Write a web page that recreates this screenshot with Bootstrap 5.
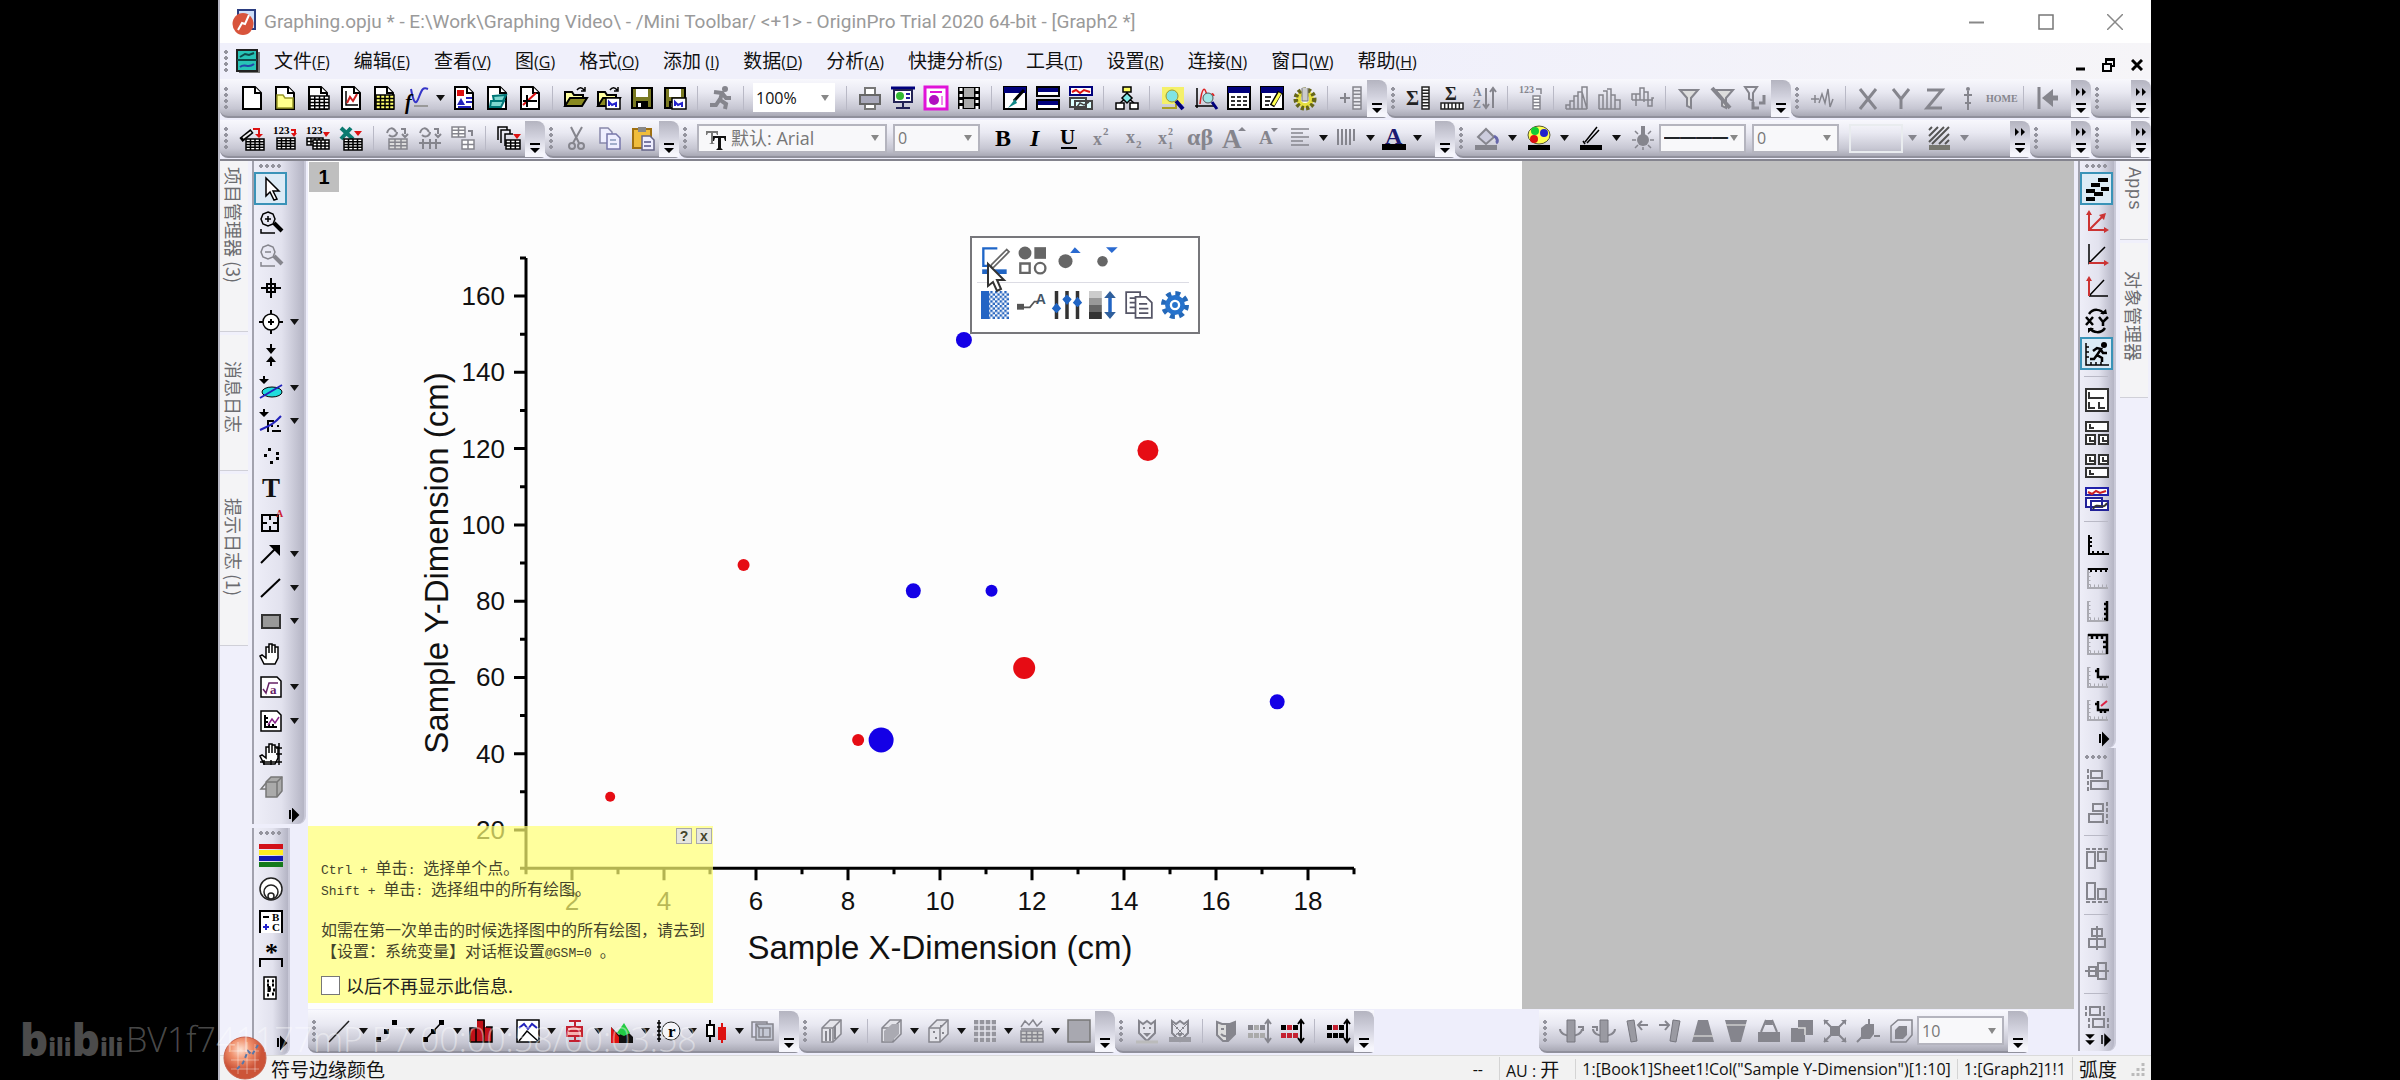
<!DOCTYPE html>
<html lang="zh-CN">
<head>
<meta charset="utf-8">
<meta name="viewport" content="width=device-width, initial-scale=1">
<title>Graphing.opju - OriginPro Trial 2020</title>
<link href="https://cdn.jsdelivr.net/npm/bootstrap@5.3.0/dist/css/bootstrap.min.css" rel="stylesheet">
<style>
body{background:#000;color:#111;font-family:"Open Sans","Noto Sans CJK SC",sans-serif;font-size:16px;line-height:20px}
.shell{display:grid;grid-template-columns:218px minmax(0,1fr) 249px;min-height:100vh}
.app-window{background:#eeeefb;grid-column:2;min-width:0;border-left:2px solid #b8b8c4}
.title-bar{height:43px;background:#fff;color:#9a9a9a;padding:0 2px 0 12px}
.title-bar h1{font:400 19px/24px Roboto,"Open Sans",sans-serif;margin:0;color:#9a9a9a}
button{font:inherit;color:inherit;background:none;border:0;padding:0;display:inline-flex;align-items:center;justify-content:center}
.win-btn{width:69px;height:40px}
.menu-row{height:36px;background:linear-gradient(90deg,#f0f0fb 60%,#f6f5f8)}
.menu-icon{margin-right:13px}
.menu-row a{color:#111;text-decoration:none;font:19px/24px "Noto Sans CJK SC",sans-serif;margin-right:24px;white-space:nowrap}
.menu-row a span{font:16px/24px "Open Sans",sans-serif}
.tool-row{height:39px}
.tool-row+.tool-row{height:41px;padding-top:2px;padding-bottom:1px}
.strip{background:linear-gradient(#f8f8fd,#e9e9f2 35%,#c6c6d2 80%,#a9a9b5);border-bottom:2px solid #90909c;border-radius:0 0 4px 8px;display:flex;align-items:center;height:100%;flex:none;min-width:0}
.strip .strip-icons{display:flex;align-items:center;height:100%;flex:none}
.grip{width:15px;height:24px;flex:none;background:radial-gradient(circle at 6px 3px,#94949e 2px,transparent 2px) 0 0/15px 6px repeat-y}
.more{width:20px;height:100%;flex:none;background:linear-gradient(#b4b4c0,#d2d2de 45%,#f6f6fc 90%);border-radius:0 8px 0 0;align-items:flex-end;margin-bottom:-2px}
.tool{width:33px;height:33px;flex:none}
.tool svg,.mini svg{width:24px;height:24px;overflow:visible}
.off{color:#85858d}
.drop{width:14px;height:33px;flex:none}
.wide .drop{width:19px}
.tool-gap{width:1px;height:24px;margin:0 6px;background:#b9b9c6;flex:none}
.combo{appearance:none;border:2px solid #b4b4be;background:#f8f8fa url("data:image/svg+xml,%3Csvg xmlns='http://www.w3.org/2000/svg' viewBox='0 0 8 6'%3E%3Cpath d='M0 0h8L4 6z' fill='%23888'/%3E%3C/svg%3E") no-repeat right 6px center/8px 6px;border-radius:0;height:29px;font:16px/22px "Open Sans","Noto Sans CJK SC",sans-serif;color:#777;padding:0 3px;margin-right:6px;flex:none;width:87px}
.combo-zoom{border:0;background-color:#fff;color:#111;width:82px;margin:0 5px 0 3px}
.face-box{position:relative;margin-left:3px;flex:none}
.face-box .combo{width:190px;padding-left:32px;font-size:18px}
.face-box svg{position:absolute;left:8px;top:4px;overflow:visible;pointer-events:none}
.before-more{margin-right:11px}
.work{height:848px}
.side-tabs{width:32px;background:#f0f0fb;flex:none}
.side-tabs.end{width:31px}
.side-tabs button{writing-mode:vertical-rl;text-orientation:sideways;font:18px/22px "Noto Sans CJK SC",sans-serif;color:#6c6c70;border-bottom:1px solid #d0d0d8;justify-content:flex-start;align-items:center;background:#f4f4f6;width:28px;padding-top:6px}
.rail{background:linear-gradient(90deg,#eeeef8,#e2e2ee 55%,#b4b4c4);border-left:2px solid #a2a2ae;border-right:2px solid #c9c9d8;border-radius:0 0 8px 0;display:flex;flex-direction:column;flex:none}
.rail .strip-icons{display:flex;flex-direction:column}
.rail-main{width:54px;height:663px}
.rail-main .strip-icons{height:633px;justify-content:space-between}
.rail-grip{height:11px;width:24px;margin-left:4px;background:radial-gradient(circle at 3px 5px,#94949e 2px,transparent 2px) 0 0/6px 11px repeat-x;flex:none}
.rail .rail-line{display:flex;align-items:center}
.rail .tool-gap{height:1px;width:24px;margin:6px 4px}
.picked{border:2px solid #3a93b8;background:#dcebf6}
.paper{flex:1214 1 0;background:#fdfdfd;position:relative;min-width:0}
.blank{flex:552 1 0;background:#bfbfbf}
.page-no{position:absolute;left:1px;top:1px;width:30px;height:30px;background:#bfbfbf;color:#000;font:bold 20px/30px "Liberation Sans",sans-serif;text-align:center}
.plot{width:100%;display:block;font-family:"Liberation Sans",sans-serif;overflow:visible}
.hint{position:absolute;left:0;bottom:6px;width:405px;height:177px;background:rgba(255,255,116,.7);font:16px/21px "Noto Sans CJK SC",sans-serif;color:#44442c;padding:31px 0 0 13px}
.hint p{margin:0 0 20px;white-space:nowrap}
.hint p+p{margin-bottom:12px}
.hint code{font:13px/0 "Liberation Mono",monospace;color:inherit;white-space:pre}
.hint label{font-size:18px;line-height:24px;color:#222}
.hint .form-check-input{width:19px;height:19px;border-radius:0;margin:0 6px 0 0;border:1px solid #777;background:#fff}
.hint-btns{position:absolute;right:1px;top:2px;gap:4px}
.hint-btns button{width:16px;height:16px;background:#e6e6e0;border:1px solid #aaa;font:bold 14px/14px "Liberation Sans",sans-serif}
.mini{position:absolute;left:662px;top:75px;width:230px;height:98px;background:#fff;border:2px solid #77777b;padding:4px 5px}
.mini button{width:36px;height:36px}
.mini svg{width:28px;height:28px}
.mini .mini-line{border-bottom:1px solid #dcdce4;height:41px;width:212px;gap:1px}
.mini .pointer{position:absolute;left:14px;top:25px;width:22px;height:30px}
.foot-tools{height:44px;padding-top:1px}
.status{background:#f2f2f2;height:27px;font-size:16px;line-height:20px;border-top:1px solid #dadada}
.status span{white-space:nowrap}
.status .cell{padding:0 6px;border-left:1px solid #d4d4d4}
.cjk{font:19px/24px "Noto Sans CJK SC",sans-serif}
.ball{position:absolute;left:223px;top:1036px;width:44px;height:44px}
.stamp{position:absolute;left:20px;top:1009px;height:60px;color:rgba(255,255,255,.3);font:300 34px/60px "Open Sans","Roboto",sans-serif;white-space:nowrap;pointer-events:none}
.stamp svg{width:98px;height:60px;margin-right:8px;overflow:visible}
.stamp .clock{color:rgba(255,255,255,.42)}
</style>
<script src="https://cdn.jsdelivr.net/npm/bootstrap@5.3.0/dist/js/bootstrap.bundle.min.js"></script>
</head>
<body>
<div class="shell position-relative overflow-hidden">
<main class="app-window d-flex flex-column">
  <header class="title-bar d-flex align-items-center">
    <svg width="24" height="26" viewBox="0 0 24 26" class="me-2"><path d="M6 1h17v19H6z" fill="#cfe0fa" stroke="#2b3d80" stroke-width="2"/><ellipse cx="11" cy="15" rx="10.500" ry="11" fill="#d8543c"/><path d="M6 21l4-7 3 1 4-9" stroke="#fff" stroke-width="2" fill="none"/></svg>
    <h1 class="me-auto text-nowrap">Graphing.opju * - E:\Work\Graphing Video\ - /Mini Toolbar/ &lt;+1&gt; - OriginPro Trial 2020 64-bit - [Graph2 *]</h1>
    <button class="win-btn" aria-label="最小化"><svg width="16" height="16"><path d="M0 8.500h15" stroke="#888" stroke-width="2"/></svg></button>
    <button class="win-btn" aria-label="最大化"><svg width="16" height="16"><path d="M1 1h14v14H1z" fill="none" stroke="#777" stroke-width="1.500"/></svg></button>
    <button class="win-btn" aria-label="关闭"><svg width="16" height="16"><path d="M0 0l16 16M16 0L0 16" stroke="#888" stroke-width="1.500"/></svg></button>
  </header>

  <nav class="menu-row d-flex align-items-center">
    <i class="grip"></i>
    <svg width="26" height="24" viewBox="0 0 26 24" class="menu-icon"><path d="M2 1h20v21H2z" fill="#27c4b6" stroke="#222" stroke-width="2"/><path d="M24 3v21H4" stroke="#777" stroke-width="2" fill="none"/><path d="M2 11h20M5 8l5-3 4 1 5-2" stroke="#0d4a4a" stroke-width="2" fill="none"/><path d="M5 18c5-4 8 2 14-3" stroke="#24a" stroke-width="2" fill="none"/></svg>
    <a href="#">文件<span>(<u>F</u>)</span></a><a href="#">编辑<span>(<u>E</u>)</span></a><a href="#">查看<span>(<u>V</u>)</span></a><a href="#">图<span>(<u>G</u>)</span></a><a href="#">格式<span>(<u>O</u>)</span></a><a href="#">添加 <span>(<u>I</u>)</span></a><a href="#">数据<span>(<u>D</u>)</span></a><a href="#">分析<span>(<u>A</u>)</span></a><a href="#">快捷分析<span>(<u>S</u>)</span></a><a href="#">工具<span>(<u>T</u>)</span></a><a href="#">设置<span>(<u>R</u>)</span></a><a href="#">连接<span>(<u>N</u>)</span></a><a href="#">窗口<span>(<u>W</u>)</span></a><a href="#">帮助<span>(<u>H</u>)</span></a>
    <div class="ms-auto d-flex align-items-center gap-3 pe-2 pt-2">
      <button aria-label="最小化图"><svg width="10" height="14"><path d="M0 11h9" stroke="#000" stroke-width="3"/></svg></button>
      <button aria-label="还原图"><svg width="13" height="14" viewBox="0 0 13 14"><path d="M4 5V1h8v7H9M1 6h8v7H1zM1 6h8M4 2h8" fill="none" stroke="#000" stroke-width="2"/></svg></button>
      <button aria-label="关闭图"><svg width="12" height="12"><path d="M1 1l10 10M11 1L1 11" stroke="#000" stroke-width="3"/></svg></button>
    </div>
  </nav>

  <div class="tool-row d-flex">
    <div class="strip"><i class="grip"></i>
      <div class="strip-icons" data-icons="new folder book graph sheet func v layout notes matrix - open opentpl save savetpl - run -"></div>
      <select class="combo combo-zoom" aria-label="缩放"><option>100%</option></select>
      <div class="strip-icons" data-icons="- print slide pink film - winpaint winsplit wingraph - tree - find findgraph wintable winedit gear - addcol"></div>
      <button class="more" data-more></button></div>
    <div class="strip"><i class="grip"></i>
      <div class="strip-icons" data-icons="sumcol sumrow sort - num - bars1 bars2 bars3 - filter filteroff filterref"></div>
      <button class="more" data-more></button></div>
    <div class="strip flex-fill"><i class="grip"></i>
      <div class="strip-icons off" data-icons="wave - bigx bigy bigz pin home - edge"></div>
      <button class="more ms-auto" data-more="2"></button></div>
    <div class="strip" style="width:60px"><i class="grip"></i><button class="more ms-auto" data-more="2"></button></div>
  </div>

  <div class="tool-row d-flex">
    <div class="strip"><i class="grip"></i>
      <div class="strip-icons" data-icons="wizard imp1 imp2 excel - re1 re2 re3 - stack"></div>
      <button class="more" data-more></button></div>
    <div class="strip"><i class="grip"></i>
      <div class="strip-icons" data-icons="cut copy paste"></div>
      <button class="more" data-more></button></div>
    <div class="strip"><i class="grip"></i>
      <div class="face-box"><select class="combo" aria-label="字体"><option>默认: Arial</option></select>
      <svg width="24" height="24" viewBox="0 0 24 24"><path d="M1 3h12v4h-1l-1-2H8v10l2 1H4l2-1V5H3L2 7H1z" fill="#777"/><path d="M8 8h13v5h-1l-1-3h-3v10l2 2h-7l2-2V10h-3l-1 3H8z" fill="#111"/></svg></div>
      <select class="combo" aria-label="字号"><option>0</option></select>
      <div class="strip-icons before-more" data-icons="bold ital under sup sub supsub greek fontup fontdown align v vert v fontcol v"></div>
      <button class="more" data-more></button></div>
    <div class="strip flex-fill"><i class="grip"></i>
      <div class="strip-icons wide" data-icons="bucket v palette v pen v sun"></div>
      <select class="combo text-dark" aria-label="线型"><option>━━━━</option></select>
      <select class="combo" aria-label="线宽"><option>0</option></select>
      <button class="border border-2 border-secondary-subtle ms-1" style="width:54px;height:29px" aria-label="填充图案"></button>
      <div class="strip-icons wide off" data-icons="v hatch v"></div>
      <button class="more ms-auto" data-more="2"></button></div>
    <div class="strip" style="width:61px"><i class="grip"></i><button class="more ms-auto" data-more="2"></button></div>
    <div class="strip" style="width:60px"><i class="grip"></i><button class="more ms-auto" data-more="2"></button></div>
  </div>

  <div class="d-flex flex-fill" style="border-top:2px solid #84848e">
    <div class="side-tabs">
      <button style="height:171px">项目管理器 (3)</button><button style="height:136px;padding-top:26px">消息日志</button><button style="height:172px;padding-top:24px">提示日志 (1)</button>
    </div>
    <div class="d-flex flex-column" style="width:56px">
      <div class="rail rail-main"><i class="rail-grip"></i>
        <div class="strip-icons" data-rail="cursor* zoomin zoomout cross target+ arrows ellipse+ mask+ dots text region arrow+ line+ rect+ hand eqn+ graphobj+ handaxis cube"></div>
        <svg class="align-self-end me-1 mt-1" width="12" height="16"><path d="M2 2v9M5 2v10l5-5z" stroke="#000" stroke-width="2"/></svg></div>
      <div class="rail mt-1 flex-fill" style="width:38px"><i class="rail-grip"></i>
        <div class="strip-icons" data-rail="stripes ring bc star dotbox"></div>
        <svg class="align-self-end mt-auto mb-1" width="12" height="16"><path d="M2 3v9M5 3v10l5-5z" stroke="#000" stroke-width="2"/></svg></div>
    </div>
    <div class="flex-fill d-flex flex-column" style="min-width:0">
      <div class="work d-flex">
        <section class="paper">
          <svg class="plot" viewBox="0 0 1214 848" id="plot" role="img" aria-label="Sample Y-Dimension 与 Sample X-Dimension 散点图"></svg>
          <span class="page-no">1</span>
          <div class="mini">
            <div class="mini-line d-flex" data-mini="edit shapes bigger smaller"></div>
            <div class="d-flex pt-1" data-mini="pattern label sliders grade copies cog"></div>
            <svg class="pointer" viewBox="0 0 22 30"><path d="M2 1v22l5-4 4 9 4-2-4-9h7z" fill="#fff" stroke="#333" stroke-width="2"/></svg>
          </div>
          <aside class="hint">
            <div class="hint-btns d-flex"><button aria-label="帮助">?</button><button aria-label="关闭提示">x</button></div>
            <p><code>Ctrl + </code>单击<code>: </code>选择单个点。<br><code>Shift + </code>单击<code>: </code>选择组中的所有绘图。</p>
            <p>如需在第一次单击的时候选择图中的所有绘图，请去到<br>【设置：系统变量】对话框设置<code>@GSM=0 </code>。</p>
            <label class="d-flex align-items-center" for="again"><input class="form-check-input" type="checkbox" id="again">以后不再显示此信息.</label>
          </aside>
        </section>
        <div class="blank"></div>
      </div>
      <div class="foot-tools d-flex">
        <div class="strip"><i class="grip"></i>
          <div class="strip-icons" data-icons="p_line v p_dots v p_ld v p_bar v p_multi v p_box v p_area v p_polar v p_candle v p_tpl"></div><button class="more" data-more></button></div>
        <div class="strip"><i class="grip"></i>
          <div class="strip-icons" data-icons="d_bars v - d_surf v d_scat v d_grid v d_prof v d_img"></div><button class="more" data-more></button></div>
        <div class="strip"><i class="grip"></i>
          <div class="strip-icons" data-icons="m_face m_facex - m_mask m_dotoff m_dot - m_dot2"></div><button class="more" data-more></button></div>
        <div class="strip ms-auto" style="margin-right:46px"><i class="grip"></i>
          <div class="strip-icons off" data-icons="r_1 r_2 r_3 r_4 r_5 r_6 r_7 r_8 r_9 r_10 r_11"></div>
          <select class="combo m-0" aria-label="旋转角度"><option>10</option></select><button class="more ms-1" data-more></button></div>
      </div>
    </div>
    <div class="d-flex flex-column ms-1 me-1" style="width:38px">
      <div class="rail"><i class="rail-grip"></i>
        <div class="strip-icons" data-rail="speed* ax1 ax2 ax3 swapxy runaxis* - lay1 lay2 lay3 lay4 - t1 t2 t3 t4 t5 t6"></div>
        <svg class="align-self-end me-1 mt-1" width="12" height="18"><path d="M2 4v9M5 4v10l5-5z" stroke="#000" stroke-width="2"/></svg></div>
      <div class="rail flex-fill mb-1 off"><i class="rail-grip mt-1"></i>
        <div class="strip-icons" data-rail="al1 al2 - al3 al4 - al5 al6 - al7"></div>
        <svg class="mt-auto mb-1 ms-1" width="30" height="14"><path d="M3 2l3 3 3-3zM3 8l3 3 3-3zM18 2v9M21 2v10l5-5z" stroke="#000" stroke-width="1.500" fill="#000"/></svg></div>
    </div>
    <div class="side-tabs end"><button style="height:79px;font-family:'Liberation Mono',monospace">Apps</button><button style="height:155px;padding-top:28px">对象管理器</button></div>
  </div>

  <footer class="status d-flex align-items-center">
    <span class="cjk me-auto" style="padding-left:51px">符号边缘颜色</span>
    <span class="pe-2 me-2">--</span><span class="cell pe-3">AU : <b class="cjk fw-normal">开</b></span>
    <span class="cell">1:[Book1]Sheet1!Col("Sample Y-Dimension")[1:10]</span><span class="cell">1:[Graph2]1!1</span><span class="cell cjk">弧度</span>
    <svg class="ms-1" width="24" height="20"><path d="M16 4v14M11 9v9M6 14v4" stroke="#bbb" stroke-width="3" stroke-dasharray="3 2"/></svg>
  </footer>
</main>
<svg class="ball" viewBox="0 0 44 44"><defs><radialGradient id="g1" cx=".4" cy=".3"><stop offset="0" stop-color="#fde0d0"/><stop offset=".5" stop-color="#f0906c"/><stop offset="1" stop-color="#cc5438"/></radialGradient></defs><circle cx="22" cy="22" r="21" fill="url(#g1)" stroke="#c8604a"/><path d="M8 15h28M8 24h28M8 33h28M15 6v32M24 6v32M32 8v28" stroke="#fff" stroke-opacity=".4"/><path d="M14 33l6-6 5-12 4 4 6-10" stroke="#5577aa" fill="none" stroke-dasharray="4 3" stroke-width="2"/></svg>
<div class="stamp d-flex align-items-center"><svg viewBox="0 0 98 60"><text x="0" y="47" font-family="Open Sans" font-weight="800" font-size="44" fill="#4b4b4b">b<tspan font-size="24">ili</tspan>b<tspan font-size="24">ili</tspan></text></svg><span>BV1f7</span><span class="clock">41177mP P7 00:00:58/00:03:58</span></div>
</div>

<script>
// Icon drawings on a 24 x 24 grid; short helpers keep the shared outlines in one place.
const L=(d,c='currentColor',w=2,f='none')=>`<path d="${d}" fill="${f}" stroke="${c}" stroke-width="${w}"/>`;
const F=(d,c='currentColor')=>`<path d="${d}" fill="${c}"/>`;
const T=(s,x,y,z,c='currentColor',e='')=>`<text x="${x}" y="${y}" font-size="${z}" fill="${c}" font-family="Liberation Serif" font-weight="bold" ${e}>${s}</text>`;
const C=(x,y,r,c)=>`<circle cx="${x}" cy="${y}" r="${r}" fill="${c}"/>`;
const G='#85858d',K='#000';
const page=(f='#fff')=>L('M3 1h12l6 6v16H3z',K,2,f)+L('M15 1v6h6',K,2,'#fff');
const grid=(x,y,w,h,n,m,c=K,f='#fff',s=1.5)=>{let d=`M${x} ${y}h${w}v${h}h${-w}z`;for(let i=1;i<n;i++)d+=`M${x+w*i/n} ${y}v${h}`;for(let i=1;i<m;i++)d+=`M${x} ${y+h*i/m}h${w}`;return L(d,c,s,f)};
const win=L('M1 1h22v22H1z',K,2,'#fff')+F('M1 1h22v6H1z','#00007c');
const redarrow=L('M13 3h6v6','#d11',2)+F('M15 8h8l-4 4z','#d11');
const cut3=(a)=>L('M3 9l8-8h11v14l-8 8H3z',G,1.5,'#e4e4ea')+L('M3 9h11v14M14 9l8-8',G,1.5)+a;
const face=c=>L('M4 2l4 3 4-3 4 3 4-3v12l-8 8-8-8z',c,2,'#e4e4ec')+F('M8 8h2v2H8zM14 8h2v2h-2z',c)+F('M8 14h8l-4 4z',c);
const disk=(c)=>L('M2 2h20v20H2z',K,2,'#7a7a22')+F('M6 3h12v8H6z','#fff')+F('M6 15h12v7H6z',K)+F('M8 17h3v4H8z','#fff')+c;
const fold=F('M1 6h7l2 3h9v11H1z','#ffffa0')+L('M1 20V6h7l2 3h9v3',K,2)+L('M1 20l5-8h17l-5 8z',K,2,'#8a8a20')+L('M13 4c2-3 5-3 7 0M21 1v4h-4',K,1.5);
const ghost=L('M3 2v20h20',"#aaaab2",2)+L('M4 2v18M5 20h18','#aaaab2',3).replace('/>',' stroke-dasharray="1 3"/>');
const hand=L('M5 22l-4-8 2-1 4 3V5h3v6V2h3v9V3h3v8V5h3v11l-3 6z',K,1.5,'#fff');
const red4=(c,c2)=>{let s='';for(const[x,y,r]of[[1,6,0],[7,6,1],[13,6,0],[1,14,1],[7,14,1],[13,14,1]])s+=F(`M${x} ${y}h5v5h-5z`,r?c2:c);return s+L('M21 1v22M18 5l3-4 3 4M18 19l3 4 3-4',c,2)};
const box=(r)=>r.map(a=>L(`M${a[0]} ${a[1]}h${a[2]}v${a[3]}h${-a[2]}z`,G,2)).join('');
const dsh=d=>L(d,G,2).replace('/>',' stroke-dasharray="4 2"/>');
const lay=r=>r.map(a=>L(`M${a[0]} ${a[1]}h${a[2]}v${a[3]}h${-a[2]}z`,'#333',2,'#fff')+L(`M${a[0]+4} ${a[1]+2}v${a[3]-5}h4`,'#333',2)).join('');
const I={
new:page(),folder:page()+L('M4 22V9h6l2 3h8v10z','#99992a',1.5,'#ffff8c'),book:page()+grid(4,10,19,13,4,4),
graph:page()+L('M7 5v14h12',K,1.5)+L('M8 17l3-6 3 4 4-7','#c22',2),sheet:page()+grid(4,9,18,14,4,4,K,'#ffff6a'),
func:L('M6 3c3 16 5 16 8 8s4-10 9-8','#3535c8')+T('f',0,23,20,K,'font-style="italic"')+L('M9 20h14','#999',2),
layout:page()+F('M5 4h7v6H5z','#d11')+F('M5 19l4-7 4 7z','#22b')+L('M14 12h6M14 16h6M6 21h13','#22b',2),
notes:page()+L('M8 10l13-1-3 6h-9zM6 15h13l-3 6H5z','#077',2,'#7fd8d0'),matrix:page()+L('M5 19L18 7','#d11')+L('M9 9v12M5 15h14',K,2),
open:fold,opentpl:fold+L('M9 12h14v11H9z',K,1.5,'#fff')+L('M12 20v-4l3 3 4-2v4','#22c',2),save:disk(''),savetpl:disk(L('M9 12h14v11H9z',K,1.5,'#fff')+L('M12 20v-4l3 3 4-2v4','#22c',2)),
run:C(16,3,3,G)+L('M5 6l8 1-2 7 6 4-1 5M11 13l-4 6H1M13 7l4 5h5',G,4),
print:L('M7 9V2h10v7M7 18v5h10v-5','#777',2,'#fff')+L('M2 9h20v9H2z','#666',2,'#aab'),
slide:L('M0 2h24','#00007c',3)+L('M3 4h18v12H3zM12 16v5M5 22h14','#225',2,'#fff')+C(9,10,4,'#3b3')+L('M15 8h4M15 12h4','#229',2),
pink:L('M1 1h22v22H1z','#e013d8',3,'#fff')+L('M6 6h12','#e013d8',2)+C(10,14,5,'#b010c0')+L('M18 10v9','#e013d8',1),
film:F('M1 1h22v22H1z',K)+F('M7 2h10v9H7zM7 13h10v9H7z','#aaa')+L('M4 2v21M20 2v21','#fff',3).replaceAll('/>',' stroke-dasharray="3 3"/>'),
winpaint:win+L('M21 4L11 15',K,3)+F('M12 13l-7 9 9-5z','#188'),winsplit:F('M1 1h22v8H1z','#00007c')+L('M1 1h22v9H1zM1 14h22v9H1z',K,2)+F('M2 6h20v3H2z','#fff')+F('M2 15h20v4H2z','#00007c')+F('M2 19h20v3H2z','#fff'),
wingraph:L('M1 1h22v8H1z','#00007c',2,'#fff')+L('M3 6l4-2 4 3 4-3 6 2','#d11',2)+L('M1 12h16v9H1zM6 15h17v8H6z','#444',2,'#dff')+L('M8 21l3-4 4 2 5-3','#444',1.5),
tree:L('M12 5v6M12 11l-7 6M12 11l7 6',K,1.5)+L('M8 1h8v5H8z',K,1.5,'#ffff60')+L('M12 7l5 5-5 5-5-5z',K,1.5,'#7fe8e8')+L('M1 17h8v6H1zM15 17h8v6h-8z',K,1.500,'#fff'),
find:F('M1 1h22v17H1z','#f4f06a')+L('M1 22h14V18','#aaa022',2)+`<circle cx="11" cy="10" r="6" fill="#7fe4e4" stroke="#9a9a30"/>`+L('M15 15l7 8','#00007c',4),
findgraph:L('M3 2v20M1 20h20',K,1.5)+L('M6 18c2-18 5-18 7-8s4-8 7 0','#d22',1.5)+`<circle cx="14" cy="12" r="5" fill="#9fe6e6" stroke="#555"/>`+L('M18 16l5 7','#00007c',3),
wintable:win+L('M4 11h16M4 15h16M4 19h16','#333',2).replace('/>',' stroke-dasharray="4 2"/>'),winedit:win+L('M5 11h6M5 15h5M5 19h4','#333',2)+L('M20 6l-8 14',K,5)+L('M20 7l-7 12','#ffff50',3),
gear:`<circle cx="12" cy="13" r="9" fill="#e8e040" stroke="#66661a" stroke-width="5" stroke-dasharray="3 2"/>`+C(12,13,7,'#e6e040')+C(12,13,4,'#fff')+F('M9 2h6v13H9z','#ccc')+L('M9 2v13h6V2','#777',1),
addcol:L('M1 12h10M6 7v10',G,2)+grid(14,1,8,22,1,6,G,'#e8e8ee'),
sumcol:T('Σ',-1,19,20,'#222')+grid(15,1,7,22,1,7,'#222'),sumrow:T('Σ',5,14,18,'#222')+grid(1,17,22,6,6,1,'#222'),
sort:T('A',0,10,12,G)+T('Z',0,22,12,G)+L('M13 2v20M10 18l3 4 3-4M20 22V2M17 6l3-4 3 4',G,2),
num:T('123',0,7,10,G)+L('M17 3h5v5',G,1.5)+grid(14,10,7,13,1,4,G),
bars1:L('M1 23v-4h4v4M5 19v-4h4v8M9 15v-5h4v13M13 10V6h4v17M17 6V1h5v22zM1 23h21',G,1.5),bars2:L('M1 23V9h4v14M5 5h4v18M9 3h4v20M13 9h4v14M17 14h5v9H1',G,1.5),
bars3:L('M1 14V8h4v12M5 8h4V2h4v14M9 2v12M13 6h4v14h4v-8h2M1 14h21',G,1.5),
filter:L('M3 4h18l-7 8v10l-4-2v-8z',G,2,'#ddd'),filteroff:L('M5 4h18l-7 8v10l-4-2v-8z',G,2,'#ddd')+L('M2 2l18 20',G,4),filterref:L('M2 1h12l-4 6v8l-4-2V7z',G,2)+L('M21 9v8h-5M10 16v6h6',G,3),
wave:L('M0 13h8M4 9v8M8 17l3-9 3 9 3-14 2 18 3-8',G,1.5),
bigx:L('M3 3l16 20M19 3L3 23',G,3),bigy:L('M3 3l8 10 8-10M11 13v10',G,3),bigz:L('M4 4h15L4 22h15',G,3),pin:C(12,3,2,G)+L('M12 5v15M8 9h8M9 17h6M12 20v4',G,2),home:T('HOME',-3,16,10),edge:L('M4 1v22',G,3)+F('M18 3v18L7 12z')+L('M15 12h8',G,5),
wizard:L('M1 14L12 5',K,5)+L('M3 12l8-6','#eee',2)+redarrow+grid(6,13,18,11,4,4),imp1:T('123',0,8,11,K)+L('M18 4h4v4','#d11')+F('M18 7h6l-3 4z','#d11')+grid(4,12,18,11,4,4),imp2:T('123',0,8,11,K)+F('M17 6h7l-4 5z','#d11')+grid(1,12,16,7,4,2)+grid(7,14,16,9,4,3),
excel:L('M2 2l12 11M12 2L2 13','#0a7a70',4)+F('M15 5h8l-4 5z','#d11')+grid(5,13,18,11,4,4),
re1:L('M2 7c2-6 6-6 9-1M12 6c0 4-5 6-8 3M16 3h4v5M17 8l3 3 3-3',G,2)+grid(4,13,18,10,3,3,G,'#ddd'),re2:L('M2 7c2-6 6-6 9-1M12 6c0 4-5 6-8 3M16 3h4v5M17 8l3 3 3-3M1 17h22M5 13v10M12 13v10M18 13v10',G,2),re3:grid(1,1,13,10,2,3,G)+L('M17 5h4v5',G)+grid(11,14,12,9,2,2,G),
stack:L('M1 14V1h9v3M4 17V4h9v4M8 20V8h8',K,1.5)+F('M16 8h8l-4 5z','#d11')+grid(9,14,14,9,3,3),
cut:L('M6 1l8 16M17 1L8 17',G,2)+`<g fill="none" stroke="${G}" stroke-width="2"><circle cx="7" cy="20" r="3"/><circle cx="16" cy="20" r="3"/></g>`,
copy:L('M2 2h8l4 4v11H2z','#88a',1.5,'#eef')+L('M9 8h9l4 4v11H9z','#77a',1.5,'#eef')+L('M12 14h6M12 18h7','#89b',1.5),
paste:L('M2 3h18v19H2z','#a07010',2,'#f0bd3c')+F('M7 1h8v5H7z','#888')+L('M11 10h8l4 4v10H11z','#668',1.5,'#eef')+L('M13 16h7M13 20h7','#558',1.5),
bold:T('B',4,20,24,K),ital:T('I',6,20,24,K,'font-style="italic"'),under:T('U',3,18,21,K)+L('M4 22h16',K,2),
sup:T('x',3,19,18,G)+T('2',13,9,11,G),sub:T('x',3,17,18,G)+T('2',13,22,11,G),supsub:T('x',2,18,18,G)+T('2',12,9,10,G)+T('1',12,23,10,G),greek:T('αβ',-2,19,24,G),
fontup:T('A',0,22,27,G)+F('M16 5l4-4 4 4z',G),fontdown:T('A',4,18,19,G)+F('M16 2h7l-4 4z',G),align:L('M3 3h18M3 7h12M3 11h18M3 15h12M3 19h18',G,1.500),vert:L('M3 3v16M7 3v16M11 3v16M15 3v16M19 3v12',G,2),
fontcol:T('A',3,18,24,'#1a1a70')+F('M0 18h24v6H0z',K),
bucket:L('M3 11l8-8 8 8-8 7z',G,2,'#ccd')+L('M19 10c4 2 4 6 2 7','#66a',3)+F('M0 19h22v5H0z',G),palette:`<ellipse cx="12" cy="9" rx="11" ry="9" fill="#ffff50" stroke="#553"/>`+C(8,5,4,'#1c3')+C(17,7,4,'#22c')+C(7,13,4,'#d11')+F('M1 19h22v5H1z',K),
pen:L('M18 1L6 16M20 4L8 17M4 15l2 3',K,1.5)+F('M1 19h22v5H1z',K),sun:C(12,14,6,G)+F('M10 0h4v10h-4z',G)+L('M1 14h4M19 14h4M4 5l3 3M20 5l-3 3M4 22l3-3M20 22l-3-3M12 21v3',G,1.5),
hatch:L('M2 4l3-3M2 10l9-9M2 16L17 1M5 18L22 1M12 18L22 8M18 18l4-4','#555',2)+F('M2 19h21v5H2z','#777770'),
cursor:L('M7 1v18l4-4 4 8 3-1-4-8h6z',K,1.500,'#fff'),zoomin:L('M9 2l5 2 2 5-2 5-5 2-5-2-2-5 2-5zM9 6v6M6 9h6M2 19v4h14',K,1.5)+L('M15 13l8 8',K,4),zoomout:L('M9 2l5 2 2 5-2 5-5 2-5-2-2-5 2-5zM6 9h6M2 19v4h14',G,1.5)+L('M15 13l8 8',G,4),
cross:L('M12 2v20M2 12h20M8 8h8v8H8z',K,2),target:`<circle cx="12" cy="12" r="8" fill="#fff" stroke="#000" stroke-width="1.5"/>`+L('M12 0v4M12 20v4M0 12h4M20 12h4M12 9v6M9 12h6',K,2),
arrows:L('M12 1v6M12 17v6',K,2)+F('M7 5h10l-5 6zM7 19h10l-5-6z',K),ellipse:`<ellipse cx="13" cy="16" rx="10" ry="5" fill="#20dcdc" stroke="#000"/>`+L('M1 22L23 9','#22b',2)+F('M0 3h10l-5 5zM4 0h2v4H4z',K),
mask:L('M9 23V12h6M12 17h2M18 17h2M13 22h9',K,2)+L('M1 21c8-4 12-4 21-14','#22b',2)+F('M0 3h10l-5 5zM4 0h2v4H4z',K),dots:F('M5 11h3v3H5zM9 5h3v3H9zM17 9h3v3h-3zM17 14h3v3h-3zM11 18h3v3h-3z',K),
text:T('T',3,21,27,'#111'),region:L('M3 6h16v16H3zM11 6v5M11 17v5M3 14h5M14 14h5',K,2)+T('A',17,8,10,'#c23'),arrow:L('M2 21L18 5',K,2)+F('M10 3h11v11z',K),line:L('M2 21L21 3',K,2),rect:L('M3 6h18v13H3z','#333',2,'#999'),
hand,eqn:L('M2 2h16l4 4v16H2z',K,1.5,'#fff')+L('M4 14l3 4 3-10h9','#626',1.500)+T('a',11,19,13,'#626'),graphobj:L('M2 2h16l4 4v16H2z',K,1.5,'#fff')+L('M6 6v12h12M5 9h4M5 13h4M10 19v-4M14 19v-4',K,2)+L('M9 16l4-6 3 4 4-6','#828',1.5),
handaxis:hand+L('M1 20h22M20 1v22M17 6h6M17 12h6M5 18v5M12 18v5',K,1.5),cube:L('M7 7l5-5h11v14l-5 6H7z','#777',1.5,'#aaa')+L('M7 7h11v15M18 7l5-5M7 14H2l5-6','#777',1.500),
stripes:F('M0 0h24v5H0z','#d21018')+F('M0 6h24v5H0z','#ffec20')+F('M0 12h24v5H0z','#1418b0')+F('M0 18h24v5H0z','#157a1c'),ring:`<g fill="#fff" stroke="#222" stroke-width="1.5"><circle cx="12" cy="12" r="11"/><circle cx="12" cy="15" r="7"/><circle cx="12" cy="19" r="3"/></g>`,
bc:L('M1 23V1h22v22',K,2,'#fff')+L('M4 7h6',K,2)+L('M4 17h6M7 14v6','#22c',2)+T('B',13,11,11,K)+T('C',13,21,11,K),star:T('*',6,18,26,K)+L('M1 24v-8h22v8',K,2),dotbox:L('M5 1h12v22H5z',K,1.5,'#fff')+L('M8 5h2M13 5h2M8 9h2M13 9h2M9 13h3M14 14h2M8 19h2M13 18h2M10 10v6',K,3),
speed:F('M13 1h10v4H13zM6 6h9v4H6zM16 10h8v4h-8zM1 12h9v4H1zM9 15h9v4H9zM1 20h9v4H1z',K),
ax1:L('M4 2v18h18M4 20L18 6','#c33',2)+F('M1 5l3-5 3 5zM19 17l5 3-5 3zM14 5l7-2-2 7z','#c33'),ax2:L('M4 1v19L20 4',K,1.500)+L('M4 20h18','#c33')+F('M19 17l5 3-5 3z','#c33'),ax3:L('M4 20h19M4 20L19 4',K,1.5)+L('M4 2v18','#c33')+F('M1 5l3-5 3 5z','#c33'),
swapxy:L('M1 8l7 8M8 8l-7 8M14 8l4 5 5-5M18 13v4M4 5c4-6 12-5 15 0M20 19c-4 6-12 5-15 0',K,2.5)+F('M15 5h7l-1-5zM9 19H3v5z',K),runaxis:L('M1 1v22h23M1 5h3M1 10h3M1 15h3M6 23v-3M11 23v-3M16 23v-3',K,1.500)+C(19,3,3,K)+L('M8 9l4-3 4 1-4 6 5 3v4M12 13l-3 4H5M16 8l2 3h4',K,2.5),
lay1:L('M1 1h22v22H1z','#333',2,'#fff')+L('M4 4v6h15M4 14v6h6M14 14v6h6','#333',2),lay2:lay([[1,1,22,9],[1,14,9,9],[14,14,9,9]]),lay3:lay([[1,1,9,9],[14,1,9,9],[1,14,22,9]]),lay4:L('M1 1h22v7H1z','#22a',2,'#fff')+L('M3 5l4 2 4-3 4 2 6-2','#c22')+L('M1 11h16v9H1zM6 14h17v9H6z','#229',2,'#fff')+L('M8 22c4-8 10 2 14-6','#333'),
t1:L('M4 2v19h20M4 5h3M4 9h3M4 13h3M8 21v-3M13 21v-3M18 21v-3',K,2),t2:ghost+L('M3 3h20M6 3v3M11 3v3M16 3v3M21 3v3',K,2),t3:ghost+L('M22 2v20M19 5h3M19 10h3M19 15h3M19 20h3',K,2.500),t4:ghost+L('M3 3h19v19M7 3v4M12 3v4M17 3v4M18 10h4M18 15h4',K,2.500),t5:ghost+L('M13 3v9h11M10 6h3M16 12v3M20 12v3',K,2.500),t6:ghost+L('M13 3v9h11M10 6h3M16 12v3M20 12v3',K,2.500)+L('M16 8l6-5','#d24',2),
al1:dsh('M3 1v22')+box([[6,3,11,7],[6,13,17,8]]),al2:dsh('M22 1v22')+box([[8,3,10,7],[4,13,14,8]]),al3:dsh('M1 2h22')+box([[2,5,8,16],[13,5,8,9]]),al4:dsh('M1 22h22')+box([[2,3,8,16],[13,9,8,10]]),al5:L('M12 0v24',G)+box([[7,3,10,7],[4,13,16,8]]),al6:L('M0 12h24',G)+box([[4,8,7,9],[13,4,8,16]]),al7:box([[5,2,10,8],[8,14,11,8]])+dsh('M1 1v10M19 1v10M4 13v10M23 13v10'),
p_line:L('M1 23L21 2','#222',1.500),p_dots:F('M1 18h5v5H1zM9 10h5v5H9zM17 1h5v5h-5z',K),p_ld:L('M3 21L20 3',K,1.5)+F('M1 18h5v5H1zM9 10h5v5H9zM17 1h5v5h-5z',K),p_bar:F('M1 23V9h7V1h8v7h7v15z','#c01018')+L('M1 23V9h6v14M8 1h7v22M17 8h6v15H1',K,1.500),
p_multi:L('M1 1h22v22H1z',K,1.500,'#fff')+L('M3 9l5-4 4 5 4-5 5 4','#22b')+L('M3 22l8-10 11 10',K,1.500),p_box:L('M12 3v18M6 2h12M6 22h12','#c42030',2)+L('M4 8h15v9H4zM4 12h15','#c42030',2,'#f4b0b0'),p_area:F('M1 8l8 8 6-6 8 8v6H1z','#111')+F('M1 8l8 10v6H1z','#d11')+F('M7 14l7-10 6 10-6 3z','#2c4'),p_polar:L('M2 1v22M0 4h4M0 8h4M0 12h4M0 16h4M0 20h4',K,1.500)+`<circle cx="14" cy="12" r="9" fill="#f4f4f8" stroke="#222"/>`+T('r',11,18,17,K),
p_candle:L('M6 1v22',K,2)+L('M3 6h7v11H3z',K,2,'#fff')+L('M18 4v20','#d11',2)+F('M14 8h8v13h-8z','#d11'),p_tpl:L('M1 3h15v15H1z',G,1.500,'#dde')+L('M5 5h17v16H5z',G,1.500,'#c4c8d4')+L('M8 9h11v9H8zM12 9v9M5 5l3 4',G,1.500),
d_bars:cut3(L('M7 22V12M11 22V10M16 20V7',G,2)),d_surf:cut3(F('M5 12l8-7h7v10l-7 7H5z','#aaaab2')),d_scat:cut3(F('M7 12h2v2H7zM14 6h2v2h-2zM9 18h2v2H9zM16 13h2v2h-2z',G)),d_grid:F('M1 1h22v22H1z','#95959d')+L('M1 6h22M1 12h22M1 18h22M6 1v22M12 1v22M18 1v22','#e4e4ec',1.5),d_prof:L('M1 8l4-6 4 4 4-5 4 6 5-5M1 10h22',G,1.5)+grid(1,12,22,11,4,3,G,'#ccc'),d_img:L('M1 1h22v22H1z','#777',1.5,'#a8a8b0'),
m_face:face(G)+L('M1 23h22','#bbb',3),m_facex:face(G)+L('M3 3l18 18M21 3L3 21',G,1)+F('M1 18h22v5H1z','#9a9aa2'),m_mask:L('M3 3l5 2h8l5-2v12l-7 7h-5l-6-6z',G,2,'#ddd')+F('M12 5h4l5-2v12l-9 8z',G)+L('M7 10h3M7 15c3 3 7 3 10 0',G,2),
m_dotoff:red4(G,'#aaa'),m_dot:red4(K,'#c42030'),m_dot2:red4(K,K)+F('M7 6h5v5H7z','#c42030'),
r_1:L('M1 10c0 9 22 9 22 0M19 8h5v4',G,2)+L('M8 1h8v22H8z','#77777f',1,'#9a9aa2'),r_2:L('M1 10c0 9 22 9 22 0M0 8h5v4',G,2)+L('M8 1h8v22H8z','#77777f',1,'#9a9aa2'),r_3:L('M2 2l7-1 3 21-6 1z','#77777f',1,'#9a9aa2')+L('M13 6h10M17 2l-4 4 4 5',G,2),r_4:L('M22 2l-7-1-3 21 6 1z','#77777f',1,'#9a9aa2')+L('M1 6h10M7 2l4 4-4 5',G,2),r_5:F('M7 1h10l6 22H1z')+L('M2 17h20','#ccc',1.5),r_6:F('M1 1h22l-6 22H7z')+L('M2 6h20','#ccc',1.5),r_7:F('M1 13h22v10H1zM9 1h6l1 5H8z')+L('M9 1L4 13M15 1l5 12'),r_8:F('M8 1h15v15H15v7H1V9h7z')+L('M8 9h7v7','#ddd',1.5),r_9:L('M1 1l7 7M23 1l-7 7M1 23l7-7M23 23l-7-7')+F('M7 7h10v10H7zM1 1h5L1 6zM23 1v5l-5-5zM1 23v-5l5 5zM23 23h-5l5-5z'),r_10:F('M5 9l5-4h8v10l-4 5H5z')+L('M1 23l5-5M18 17h6M13 0v6'),r_11:L('M2 7l7-6h14v15l-6 7H2z',G,1.500)+F('M6 11l4-4h8v9l-4 4H6z'),
edit:L('M14 2H2v15h5','#1f66c8',2)+L('M22 3L9 16l-1 3 3-1L24 5z','#666',1.500,'#fff')+F('M1 20h21v4H1z','#2165c4'),
shapes:C(6,6,5.500,'#666')+F('M14 1h10v10H14z','#666')+L('M2 15h8v8H2z','#666',2)+`<circle cx="19" cy="19" r="4.500" fill="none" stroke="#666" stroke-width="2"/>`,bigger:C(9,13,6,'#666')+F('M13 6l4-5 5 5z','#2a6ad0'),smaller:C(9,13,4.500,'#666')+F('M12 1h10l-5 5z','#2a6ad0'),
pattern:'<defs><pattern id="chk" width="4" height="4" patternUnits="userSpaceOnUse"><path d="M0 0h2v2H0zM2 2h2v2H2z" fill="#2463be"/></pattern></defs>'+F('M0 0h7v24H0z','#2364c4')+F('M7 0h17v24H7z','url(#chk)'),
label:F('M0 11h6v5H0z','#555')+L('M5 14h6l4-5h3','#555',1.500)+`<text x="16" y="11" font-size="12" font-weight="bold" font-family="Liberation Sans" fill="#456">A</text>`,
sliders:L('M3 0v24M12 0v24M21 0v24','#333',3)+F('M3 10l4 5-4 4-4-4zM12 3l4 4-4 5-4-5zM21 5l4 5-4 4-4-4z','#2165c4'),grade:F('M0 0h11v6H0z','#ccc')+F('M0 6h11v6H0z','#999')+F('M0 12h11v6H0z','#666')+F('M0 18h11v6H0z','#333')+L('M18 4v16','#2165c4',3)+F('M13 6l5-6 5 6zM13 18l5 6 5-6z','#2f5f9c'),
copies:L('M1 1h12v18H1z','#556',1.500,'#fff')+L('M4 6h5M4 10h5M4 14h5','#556',1.5)+L('M9 5h9l5 5v13H9z','#556',1.500,'#fff')+L('M12 11h7M12 15h8M12 19h8','#556',1.5),
cog:`<circle cx="12" cy="12" r="9.500" fill="none" stroke="#2468b8" stroke-width="5" stroke-dasharray="4 3.460"/><circle cx="12" cy="12" r="6.500" fill="#fff" stroke="#2773cc" stroke-width="4"/>`+C(12,12,2.500,'#2773cc')};
const svg=n=>`<svg viewBox="0 0 24 24" aria-hidden="true">${I[n]}</svg>`;
const tri='<svg width="9" height="6"><path d="M0 0h9L4.500 6z" fill="currentColor"/></svg>';
document.querySelectorAll('[data-icons]').forEach(e=>{let prev='';e.innerHTML=e.dataset.icons.split(' ').map(n=>{
  if(n==='-')return '<i class="tool-gap"></i>';
  if(n==='v')return `<button class="drop" aria-label="更多 ${prev}">${tri}</button>`;
  prev=n;return `<button class="tool" aria-label="${n}">${svg(n)}</button>`}).join('')});
document.querySelectorAll('[data-rail]').forEach(e=>e.innerHTML=e.dataset.rail.split(' ').map(k=>{
  if(k==='-')return '<i class="tool-gap"></i>';
  const n=k.replace(/[*+]/,'');
  return `<div class="rail-line"><button class="tool${k.endsWith('*')?' picked':''}" aria-label="${n}">${svg(n)}</button>${k.endsWith('+')?`<button class="drop" aria-label="更多 ${n}">${tri}</button>`:''}</div>`}).join(''));
document.querySelectorAll('[data-mini]').forEach(e=>e.innerHTML=e.dataset.mini.split(' ').map(n=>`<button aria-label="${n}">${svg(n)}</button>`).join(''));
document.querySelectorAll('[data-more]').forEach(b=>{b.ariaLabel='工具栏选项';b.innerHTML=`<svg width="14" height="36" viewBox="0 0 14 36">${b.dataset.more==='2'?'<path d="M2 7l4 4-4 4zM8 7l4 4-4 4z"/>':''}<path d="M2 22h10v2H2zM2 27h10l-5 5z"/></svg>`});

// Scatter plot
const X=v=>264+46*(v-2),Y=v=>669-3.814*(v-20);
let s=`<path d="M${X(1)} ${Y(170)}V${Y(10)}H${X(19)}" fill="none" stroke="#000" stroke-width="3"/>`,d='';
for(let v=10;v<=170;v+=10)d+=`M${X(1)} ${Y(v)}h${v%20?-6:-12}`;
for(let v=1;v<=19;v++)d+=`M${X(v)} ${Y(10)}v${v%2?6:12}`;
s+=`<path d="${d}" stroke="#000" stroke-width="3"/><g font-size="26" fill="#111">`;
for(let v=20;v<=160;v+=20)s+=`<text x="197" y="${Y(v)+9}" text-anchor="end">${v}</text>`;
for(let v=2;v<=18;v+=2)s+=`<text x="${X(v)}" y="749" text-anchor="middle">${v}</text>`;
s+=`</g><g font-size="33" fill="#111" text-anchor="middle"><text x="632" y="798">Sample X-Dimension (cm)</text><text transform="translate(140 402) rotate(-90)">Sample Y-Dimension (cm)</text></g>`;
for(const[x,y,r,c]of[[10.52,148.5,8,0],[14.52,119.5,10.5,1],[5.73,89.5,6,1],[9.42,82.7,7.5,0],[11.12,82.7,6,0],[11.83,62.5,11,1],[17.33,53.6,7.5,0],[8.22,43.6,6,1],[8.72,43.6,12.5,0],[2.83,28.7,5,1]])
  s+=`<circle cx="${X(x)}" cy="${Y(y)}" r="${r}" fill="${c?'#e60c14':'#1400e6'}"/>`;
document.getElementById('plot').innerHTML=s;
</script>
</body>
</html>
